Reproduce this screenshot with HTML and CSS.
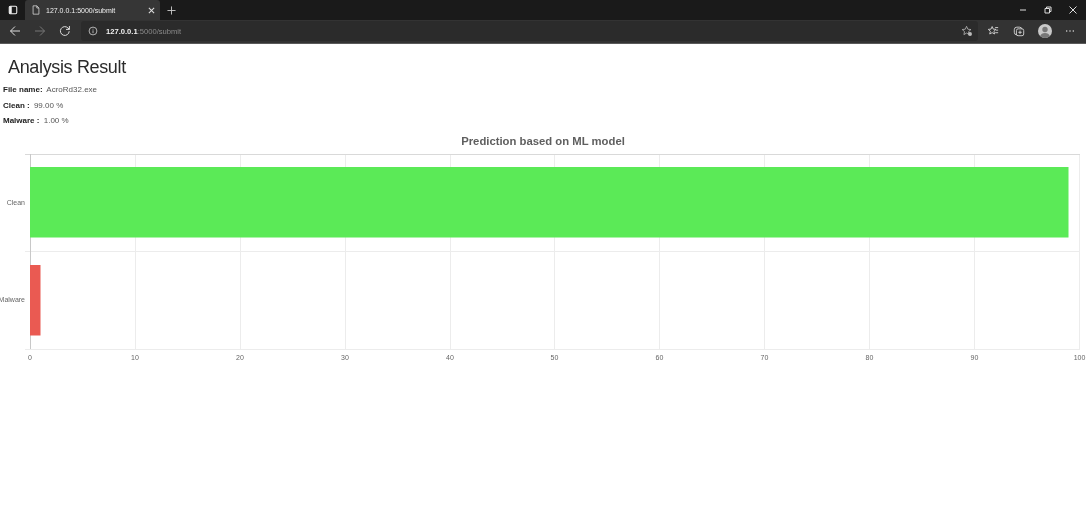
FILE: index.html
```html
<!DOCTYPE html>
<html lang="en">
<head>
<meta charset="utf-8">
<title>127.0.0.1:5000/submit</title>
<link rel="stylesheet" href="styles.css">
</head>
<body>
<header class="browser">
  <div class="tabstrip">
    <div class="tab-actions">
      <svg class="icon" viewBox="0 0 12 12"><rect x="1.5" y="1.5" width="9" height="9" rx="1.5" fill="none" stroke="#eee" stroke-width="1.3"/><rect x="1.5" y="1.5" width="3" height="9" fill="#eee"/></svg>
    </div>
    <div class="tab">
      <svg class="icon" viewBox="0 0 12 12"><path d="M2.5 1h4.5l2.5 2.6V11h-7zM7 1v2.6h2.5" fill="none" stroke="#ddd" stroke-width=".9"/></svg>
      <span class="tab-title">127.0.0.1:5000/submit</span>
      <svg class="tab-close" viewBox="0 0 8 8"><path d="M1 1l6 6M7 1L1 7" stroke="#ddd" stroke-width="1.200"/></svg>
    </div>
    <svg class="newtab" viewBox="0 0 10 10"><path d="M5 .5v9M.5 5h9" stroke="#ccc" stroke-width="1"/></svg>
    <div class="window-controls">
      <svg class="wc" viewBox="0 0 10 10"><path d="M2 5h6" stroke="#ddd" stroke-width="1"/></svg>
      <svg class="wc" viewBox="0 0 10 10"><path d="M2 3.5h4.5V8H2zM3.5 3.5V2H8v4.5H6.5" fill="none" stroke="#ddd" stroke-width="1"/></svg>
      <svg class="wc" viewBox="0 0 10 10"><path d="M1.5 1.5l7 7M8.5 1.5l-7 7" stroke="#ddd" stroke-width="1"/></svg>
    </div>
  </div>
  <div class="toolbar">
    <div class="nav">
      <svg class="nav-icon" viewBox="0 0 12 12"><path d="M11 6H1.5M6 1.5L1.5 6 6 10.5" fill="none" stroke="#ddd" stroke-width="1"/></svg>
      <svg class="nav-icon" viewBox="0 0 12 12"><path d="M1 6h9.5M6 1.5L10.5 6 6 10.5" fill="none" stroke="#777" stroke-width="1"/></svg>
      <svg class="nav-icon" viewBox="0 0 12 12"><path d="M10.2 6.2a4.4 4.4 0 1 1-1.2-3.2L10.4 4.400M10.400 1v3.400H7" fill="none" stroke="#ddd" stroke-width="1"/></svg>
    </div>
    <div class="address">
      <svg class="info" viewBox="0 0 12 12"><circle cx="6" cy="6" r="4.700" fill="none" stroke="#ddd" stroke-width=".9"/><path d="M6 5.200v3.400M6 3.300v1" stroke="#ddd" stroke-width=".9"/></svg>
      <span class="url"><span class="host">127.0.0.1</span>:5000/submit</span>
      <svg class="star" viewBox="0 0 14 14"><path d="M6.500 1.500l1.500 3.400 3.600.4-2.700 2.400.7 3.500-3.100-1.800-3.100 1.800.7-3.500L1.400 5.300 5 4.900z" fill="none" stroke="#bbb" stroke-width=".9"/><circle cx="10.500" cy="10.500" r="2.300" fill="#bbb"/></svg>
    </div>
    <div class="tools">
      <svg class="tool" viewBox="0 0 14 14"><path d="M6 1.800l1.300 3 3.200.3-2.400 2.200.7 3.200L6 8.900l-2.800 1.600.7-3.200L1.500 5.100l3.200-.3z" fill="none" stroke="#ddd" stroke-width="1"/><path d="M9.500 3h3.500M10.500 6h2.500M9.500 9h3.500" stroke="#ddd" stroke-width="1"/></svg>
      <svg class="tool" viewBox="0 0 14 14"><rect x="1.500" y="2.500" width="9" height="9" rx="3" fill="none" stroke="#ddd" stroke-width="1"/><rect x="4" y="4.500" width="8.500" height="8" rx="2" fill="#333" stroke="#ddd" stroke-width="1"/><path d="M8.200 6.500v4M6.200 8.500h4" stroke="#ddd" stroke-width="1"/></svg>
      <svg class="avatar" viewBox="0 0 14 14"><circle cx="7" cy="7" r="7" fill="#c9c9c9"/><circle cx="7" cy="5.500" r="2.700" fill="#777"/><path d="M2.200 12a5 4.200 0 0 1 9.600 0 7 7 0 0 1-9.600 0z" fill="#777"/></svg>
      <svg class="more" viewBox="0 0 12 4"><circle cx="2" cy="2" r=".9" fill="#ddd"/><circle cx="6" cy="2" r=".9" fill="#ddd"/><circle cx="10" cy="2" r=".9" fill="#ddd"/></svg>
    </div>
  </div>
</header>
<main class="page">
  <h1 class="title">Analysis Result</h1>
  <p class="row"><b>File name:</b> <span>AcroRd32.exe</span></p>
  <p class="row"><b>Clean :</b> <span>99.00 %</span></p>
  <p class="row"><b>Malware :</b> <span>1.00 %</span></p>
  <svg class="chart" viewBox="0 0 1086 240" width="1086" height="240">
    <text class="chart-title" x="543" y="23" text-anchor="middle">Prediction based on ML model</text>
    <g class="grid">
      <path d="M135.500 32v195M240.500 32v195M345.500 32v195M450.500 32v195M554.500 32v195M659.500 32v195M764.500 32v195M869.500 32v195M974.500 32v195M1079.500 32v195"/>
      <path d="M25 129.500h1055M25 227.500h1055"/>
    </g>
    <path class="grid-top" d="M25 32.500h1055"/>
    <path class="axis" d="M30.500 32v195"/>
    <rect class="bar-clean" x="30" y="45" width="1038.500" height="70.500"/>
    <rect class="bar-malware" x="30" y="143" width="10.500" height="70.500"/>
    <g class="labels">
      <text x="25" y="83" text-anchor="end">Clean</text>
      <text x="25" y="180" text-anchor="end">Malware</text>
      <g text-anchor="middle">
        <text x="30" y="238">0</text><text x="135" y="238">10</text><text x="240" y="238">20</text><text x="345" y="238">30</text><text x="450" y="238">40</text><text x="554.500" y="238">50</text><text x="659.500" y="238">60</text><text x="764.500" y="238">70</text><text x="869.500" y="238">80</text><text x="974.500" y="238">90</text><text x="1079.500" y="238">100</text>
      </g>
    </g>
  </svg>
</main>
</body>
</html>
```
FILE: styles.css
```css
* { box-sizing: border-box; }
html, body { margin: 0; padding: 0; height: 526px; overflow: hidden; background: #fff; }
body { font-family: "Liberation Sans", Arial, sans-serif; }

.browser { height: 44px; background: #333; border-bottom: 1px solid #5a5a5a; }
.tabstrip { height: 20px; background: #1a1a1a; display: flex; align-items: center; }
.tab-actions { width: 25px; display: flex; justify-content: center; }
.icon { width: 10px; height: 10px; flex: none; }
.tab { width: 135px; height: 20px; background: #363636; border-radius: 3px 3px 0 0; display: flex; align-items: center; padding: 0 5px 0 6px; }
.tab-title { color: #f0f0f0; font-size: 7px; margin-left: 5px; flex: 1; white-space: nowrap; filter: blur(.25px); }
.tab-close { width: 7px; height: 7px; }
.newtab { width: 9px; height: 9px; margin-left: 7px; }
.window-controls { margin-left: auto; display: flex; gap: 15px; padding-right: 8px; }
.wc { width: 10px; height: 10px; }

.toolbar { height: 22px; display: flex; align-items: center; }
.nav { width: 81px; display: flex; gap: 13px; padding-left: 9px; }
.nav-icon { width: 12px; height: 12px; }
.address { width: 897px; height: 20px; background: #2b2b2b; border-radius: 3px; display: flex; align-items: center; padding: 0 5px 0 7px; }
.info { width: 10px; height: 10px; }
.url { margin-left: 8px; font-size: 7.600px; color: #8a8a8a; flex: 1; filter: blur(.25px); }
.host { color: #f0f0f0; font-weight: bold; }
.star { width: 12px; height: 12px; }
.tools { display: flex; align-items: center; padding-left: 9px; gap: 14px; }
.tool { width: 12px; height: 12px; }
.avatar { width: 14px; height: 14px; margin-left: -1px; }
.more { width: 10px; height: 4px; margin-left: -1px; }

.page { padding-top: 13px; }
.title { margin: 0 0 0 8px; font-size: 18px; line-height: 20px; font-weight: normal; color: #2b2b2b; letter-spacing: -0.350px; filter: blur(.3px); }
.row { margin: 0; padding-left: 3px; height: 15.500px; line-height: 15.500px; font-size: 8px; color: #555; white-space: nowrap; filter: blur(.3px); }
.row:first-of-type { margin-top: 5px; }
.row b { color: #222; margin-right: 2px; }
.chart { display: block; margin-top: -7px; }
.chart-title { font-size: 11.300px; font-weight: bold; fill: #5f5f5f; filter: blur(.3px); }
.grid path { fill: none; stroke: #ececec; stroke-width: 1; }
.grid-top { fill: none; stroke: #d9d9d9; stroke-width: 1.200; }
.axis { fill: none; stroke: #c8c8c8; stroke-width: 1; }
.bar-clean { fill: #5bea57; }
.bar-malware { fill: #ea5a52; }
.labels { filter: blur(.3px); }
.labels text { font-size: 7px; fill: #666; }
```
